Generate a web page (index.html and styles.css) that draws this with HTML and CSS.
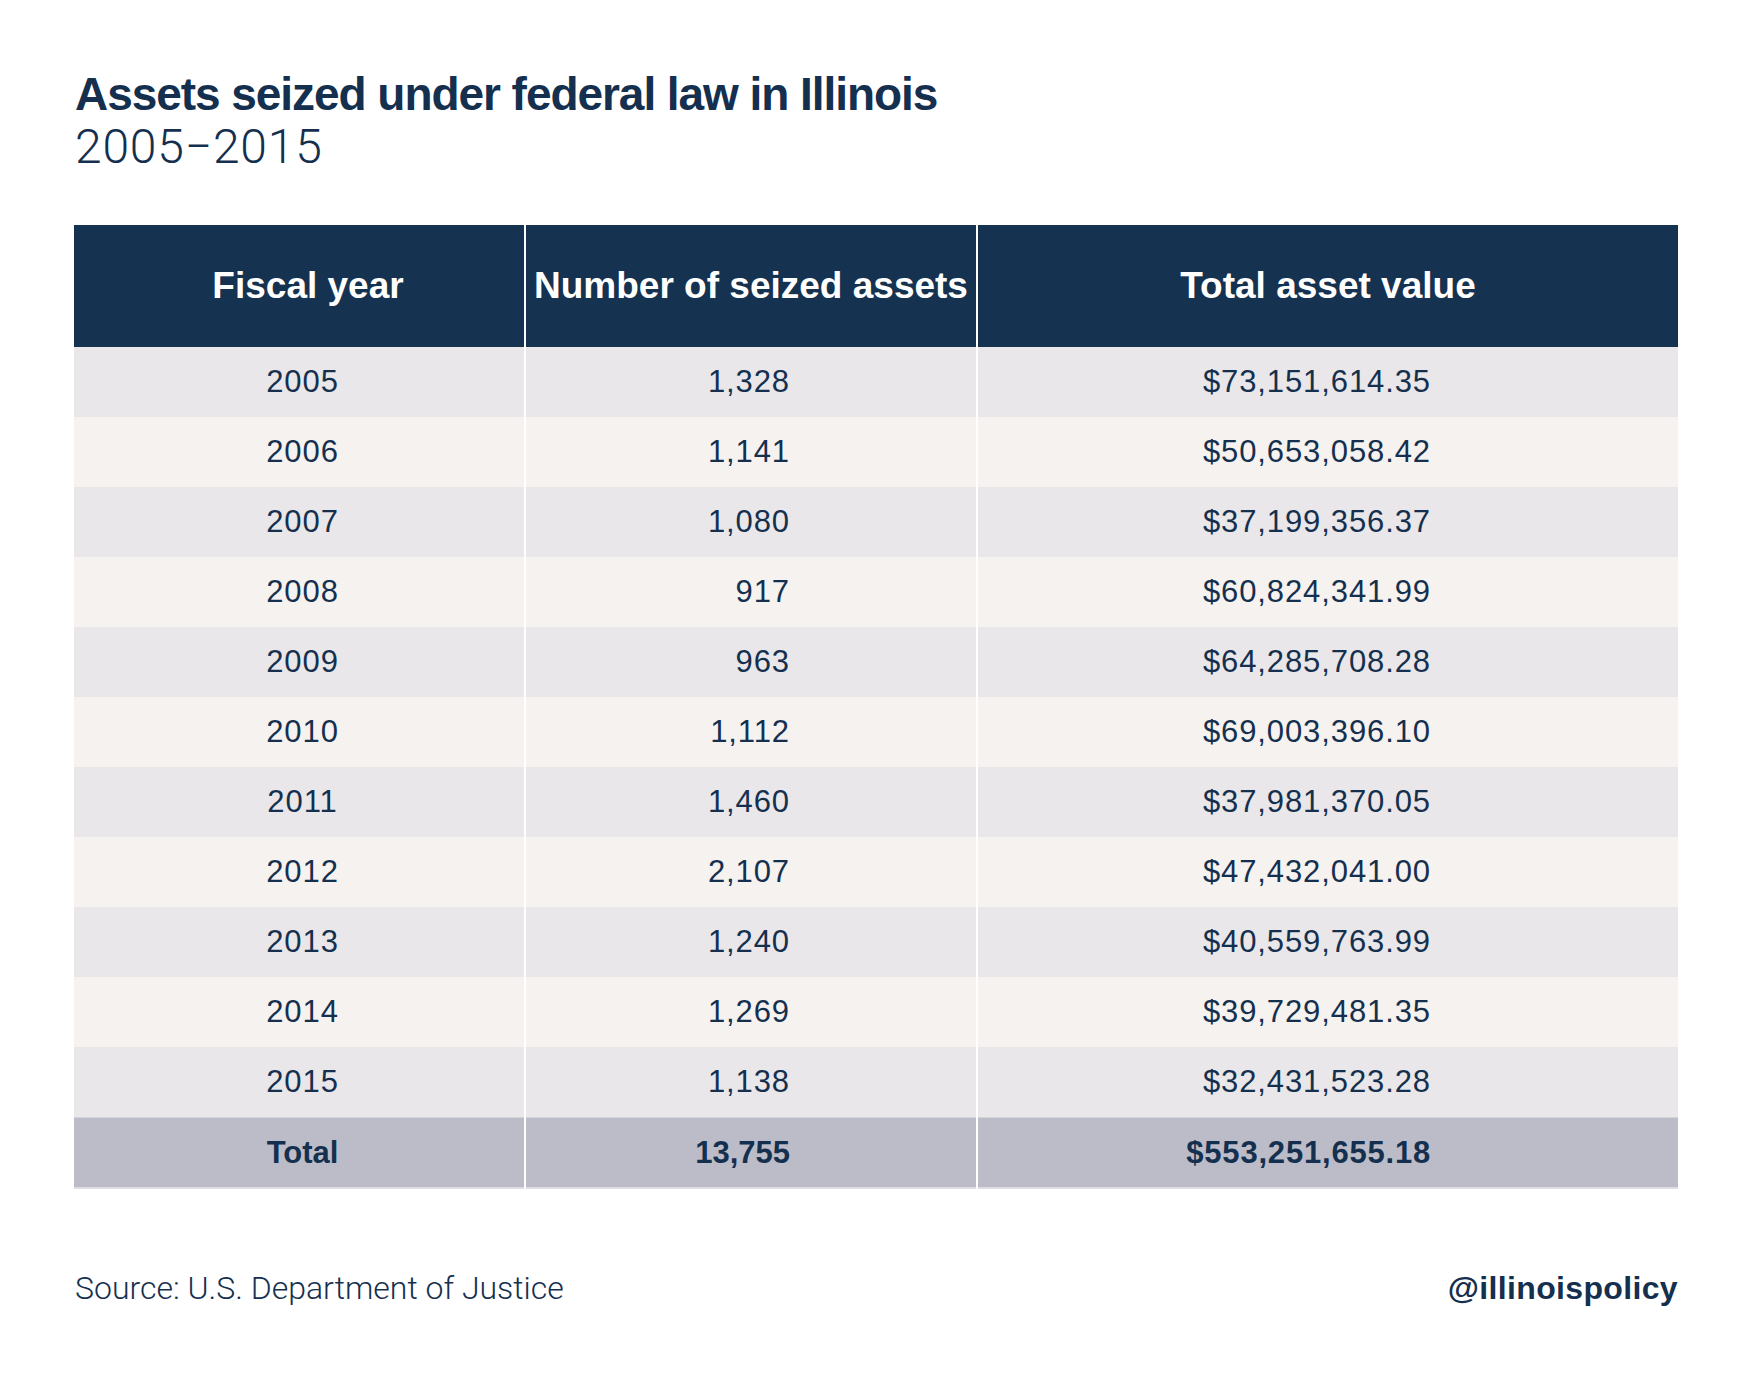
FILE: index.html
```html
<!DOCTYPE html>
<html lang="en">
<head>
<meta charset="utf-8">
<title>Assets seized under federal law in Illinois</title>
<link rel="stylesheet" href="styles.css">
</head>
<body>
<main class="page">
  <header class="heading">
    <h1 class="title">Assets seized under federal law in Illinois</h1>
    <p class="subtitle">2005&minus;2015</p>
  </header>

  <div class="table">
    <div class="cell head head-year">Fiscal year</div>
    <div class="cell head">Number of seized assets</div>
    <div class="cell head">Total asset value</div>

    <div class="cell odd year">2005</div><div class="cell odd num">1,328</div><div class="cell odd val">$73,151,614.35</div>
    <div class="cell even year">2006</div><div class="cell even num">1,141</div><div class="cell even val">$50,653,058.42</div>
    <div class="cell odd year">2007</div><div class="cell odd num">1,080</div><div class="cell odd val">$37,199,356.37</div>
    <div class="cell even year">2008</div><div class="cell even num">917</div><div class="cell even val">$60,824,341.99</div>
    <div class="cell odd year">2009</div><div class="cell odd num">963</div><div class="cell odd val">$64,285,708.28</div>
    <div class="cell even year">2010</div><div class="cell even num">1,112</div><div class="cell even val">$69,003,396.10</div>
    <div class="cell odd year">2011</div><div class="cell odd num">1,460</div><div class="cell odd val">$37,981,370.05</div>
    <div class="cell even year">2012</div><div class="cell even num">2,107</div><div class="cell even val">$47,432,041.00</div>
    <div class="cell odd year">2013</div><div class="cell odd num">1,240</div><div class="cell odd val">$40,559,763.99</div>
    <div class="cell even year">2014</div><div class="cell even num">1,269</div><div class="cell even val">$39,729,481.35</div>
    <div class="cell odd year">2015</div><div class="cell odd num">1,138</div><div class="cell odd val">$32,431,523.28</div>

    <div class="cell total year">Total</div><div class="cell total num">13,755</div><div class="cell total val total-val">$553,251,655.18</div>
  </div>

  <footer class="footer">
    <span class="source">Source: U.S. Department of Justice</span>
    <span class="handle">@illinoispolicy</span>
  </footer>
</main>
</body>
</html>
```

FILE: styles.css
```css
html, body {
  margin: 0;
  padding: 0;
  background: #ffffff;
}

body {
  font-family: "Liberation Sans", Arial, sans-serif;
  color: #15304f;
}

.page {
  width: 1604px;
  padding: 68px 0 0 74px;
}

.heading {
  padding-left: 1px;
}

.title {
  margin: 0;
  font-size: 46px;
  line-height: 52px;
  font-weight: 700;
  letter-spacing: -1.05px;
  color: #15304f;
}

.subtitle {
  margin: 0;
  font-family: Roboto, "Liberation Sans", sans-serif;
  font-weight: 300;
  font-size: 48px;
  line-height: 54px;
  letter-spacing: 0.8px;
  color: #15304f;
}

.table {
  margin-top: 51px;
  display: grid;
  grid-template-columns: 450px 450px 700px;
  column-gap: 2px;
  background: #ffffff;
}

.cell {
  height: 70px;
  display: flex;
  align-items: center;
  font-size: 31px;
  letter-spacing: 0.9px;
  color: #15304f;
}

.head {
  height: 122px;
  background: #153251;
  color: #ffffff;
  font-weight: 700;
  font-size: 37px;
  letter-spacing: 0;
  justify-content: center;
}

.head-year {
  padding-left: 18px;
}

.odd { background: #e9e7e9; }
.even { background: #f5f2ef; }

.total {
  background: #bcbcc8;
  font-weight: 700;
  letter-spacing: 0;
  border-top: 1px solid #d6d5dc;
  border-bottom: 2px solid #dcdce2;
  height: 69px;
}

.total-val {
  letter-spacing: 0.8px;
}

.year {
  justify-content: center;
  padding-left: 7px;
}

.num {
  justify-content: flex-end;
  padding-right: 186px;
}

.val {
  justify-content: flex-end;
  padding-right: 247px;
}

.footer {
  margin-top: 81px;
  display: flex;
  justify-content: space-between;
  align-items: baseline;
  padding-left: 1px;
}

.source {
  font-family: Roboto, "Liberation Sans", sans-serif;
  font-weight: 300;
  font-size: 32px;
  line-height: 36px;
}

.handle {
  font-weight: 700;
  font-size: 32px;
  line-height: 36px;
  letter-spacing: 0.35px;
}
```
